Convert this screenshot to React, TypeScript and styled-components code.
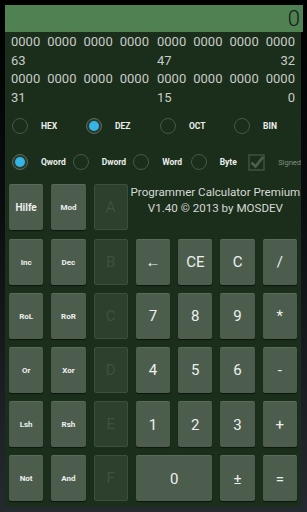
import styled, { createGlobalStyle } from 'styled-components';

const GlobalStyle = createGlobalStyle`
  html, body {
    margin: 0;
    padding: 0;
  }
  body {
    background: linear-gradient(180deg, #000 0%, #0a0d0e 40%, #252a30 100%);
    font-family: Roboto, "Noto Sans", sans-serif;
  }
`;

const Frame = styled.div`
  width: 307px;
  height: 512px;
  box-sizing: border-box;
  padding: 5px 5px 5px 5px;
  display: flex;
  flex-direction: column;
`;

const Display = styled.div`
  height: 27px;
  flex: none;
  background: #4f8152;
  color: #141a14;
  font-size: 22px;
  font-weight: 300;
  line-height: 27px;
  text-align: right;
  padding-right: 3px;
  margin-right: -1px;
`;

const Panel = styled.div`
  flex: 1;
  background: #1b2e1b;
  margin-right: 1px;
  display: flex;
  flex-direction: column;
`;

const Bits = styled.div`
  padding: 1px 6px 0 6px;
  color: #c8cbc8;
  font-size: 13px;
  line-height: 18.6px;
`;

const BitLine = styled.div`
  display: grid;
  grid-template-columns: 1fr 1fr;
  column-gap: 8px;
`;

const Half = styled.div`
  display: flex;
  justify-content: space-between;
`;

const RadioRow = styled.div<{ $cols: number; $h: number }>`
  display: grid;
  grid-template-columns: repeat(${(p) => p.$cols}, 1fr);
  height: ${(p) => p.$h}px;
  align-items: center;
`;

const Option = styled.label`
  display: flex;
  align-items: center;
  padding-left: 7px;
  gap: 13px;
  color: #eceeec;
  font-size: 8.5px;
  font-weight: bold;
`;

const Radio = styled.span<{ $on?: boolean }>`
  width: 16px;
  height: 16px;
  box-sizing: border-box;
  border-radius: 50%;
  border: 1.5px solid ${(p) => (p.$on ? '#5a6b5c' : '#45584a')};
  background: ${(p) => (p.$on ? '#2c3a2e' : 'transparent')};
  display: flex;
  align-items: center;
  justify-content: center;
  flex: none;

  &::after {
    content: '';
    width: 10px;
    height: 10px;
    border-radius: 50%;
    background: ${(p) => (p.$on ? '#33b5e5' : 'transparent')};
  }
`;

const CheckOption = styled(Option)`
  color: #7f8e80;
  font-weight: normal;
  font-size: 7.5px;
  gap: 13px;
`;

const Keypad = styled.div`
  display: grid;
  grid-template-columns: repeat(7, 1fr);
  grid-template-rows: repeat(6, 46px);
  gap: 8.2px 8px;
  padding: 4px 4px 0 4px;
`;

const Key = styled.button<{ $size?: 'sm' | 'md' | 'lg'; $span?: number }>`
  grid-column: span ${(p) => p.$span ?? 1};
  margin: 0;
  padding: 0;
  border: none;
  border-top: 1px solid #5a6b5b;
  border-radius: 2px;
  background: #4c5d4e;
  box-shadow: 0 1px 1px rgba(0, 0, 0, 0.55);
  color: #eef0ee;
  font-family: Roboto, "Noto Sans", sans-serif;
  font-size: ${(p) => (p.$size === 'sm' ? '8px' : p.$size === 'md' ? '10px' : '15px')};
  font-weight: ${(p) => (p.$size === 'lg' || !p.$size ? 'normal' : 'bold')};
`;

const HexKey = styled.button`
  margin: 0;
  padding: 0;
  border: 1px solid #3b4f3c;
  border-radius: 2px;
  background: #2c402d;
  color: #3d523e;
  font-family: Roboto, "Noto Sans", sans-serif;
  font-size: 15px;
`;

const Title = styled.div`
  grid-column: span 4;
  color: #d6d9d6;
  font-size: 11.6px;
  line-height: 16px;
  text-align: center;
  white-space: nowrap;
  margin-left: -6px;
  margin-right: -4px;
  padding-top: 0px;
`;

const groups = Array.from({ length: 4 }, () => '0000');

const BitGroups = () => (
  <BitLine>
    <Half>
      {groups.map((g, i) => (
        <span key={i}>{g}</span>
      ))}
    </Half>
    <Half>
      {groups.map((g, i) => (
        <span key={i}>{g}</span>
      ))}
    </Half>
  </BitLine>
);

const BitIndex = ({ a, b, c }: { a: string; b: string; c: string }) => (
  <BitLine>
    <Half>
      <span>{a}</span>
    </Half>
    <Half>
      <span>{b}</span>
      <span>{c}</span>
    </Half>
  </BitLine>
);

const CheckBox = () => (
  <svg width="17" height="17" viewBox="0 0 17 17">
    <rect x="1" y="1" width="15" height="15" fill="none" stroke="#3f5240" strokeWidth="1.5" />
    <path d="M3.5 8.5 L7.5 12.5 L15 3" fill="none" stroke="#4d604e" strokeWidth="2.6" />
  </svg>
);

export default function App() {
  return (
    <>
      <GlobalStyle />
      <Frame>
        <Display>0</Display>
        <Panel>
          <Bits>
            <BitGroups />
            <BitIndex a="63" b="47" c="32" />
            <BitGroups />
            <BitIndex a="31" b="15" c="0" />
          </Bits>
          <RadioRow $cols={4} $h={37}>
            <Option><Radio />HEX</Option>
            <Option><Radio $on />DEZ</Option>
            <Option><Radio />OCT</Option>
            <Option><Radio />BIN</Option>
          </RadioRow>
          <RadioRow $cols={5} $h={36}>
            <Option><Radio $on />Qword</Option>
            <Option><Radio />Dword</Option>
            <Option><Radio />Word</Option>
            <Option><Radio />Byte</Option>
            <CheckOption><CheckBox />Signed</CheckOption>
          </RadioRow>
          <Keypad>
            <Key $size="md">Hilfe</Key>
            <Key $size="sm">Mod</Key>
            <HexKey>A</HexKey>
            <Title>
              Programmer Calculator Premium
              <br />
              V1.40 © 2013 by MOSDEV
            </Title>

            <Key $size="sm">Inc</Key>
            <Key $size="sm">Dec</Key>
            <HexKey>B</HexKey>
            <Key>←</Key>
            <Key>CE</Key>
            <Key>C</Key>
            <Key>/</Key>

            <Key $size="sm">RoL</Key>
            <Key $size="sm">RoR</Key>
            <HexKey>C</HexKey>
            <Key>7</Key>
            <Key>8</Key>
            <Key>9</Key>
            <Key>*</Key>

            <Key $size="sm">Or</Key>
            <Key $size="sm">Xor</Key>
            <HexKey>D</HexKey>
            <Key>4</Key>
            <Key>5</Key>
            <Key>6</Key>
            <Key>-</Key>

            <Key $size="sm">Lsh</Key>
            <Key $size="sm">Rsh</Key>
            <HexKey>E</HexKey>
            <Key>1</Key>
            <Key>2</Key>
            <Key>3</Key>
            <Key>+</Key>

            <Key $size="sm">Not</Key>
            <Key $size="sm">And</Key>
            <HexKey>F</HexKey>
            <Key $span={2}>0</Key>
            <Key>±</Key>
            <Key>=</Key>
          </Keypad>
        </Panel>
      </Frame>
    </>
  );
}
